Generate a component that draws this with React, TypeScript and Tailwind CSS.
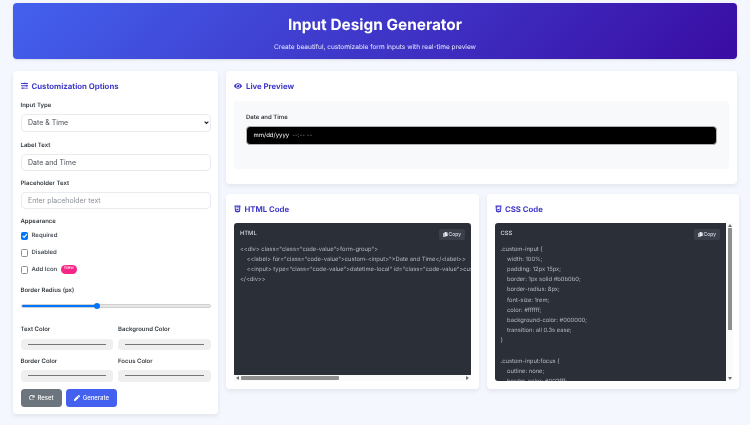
import React from "react";
import { FaCopy, FaCss3Alt, FaEye, FaHtml5, FaPen, FaRedo, FaSlidersH } from "react-icons/fa";

const labelCls = "block text-[6px] leading-[10px] font-semibold text-[#343a40]";
const titleCls = "flex items-center h-[11px] text-[7.8px] font-bold text-[#3f37c9]";
const inputCls = "block w-full h-[17.5px] px-[6.5px] text-[7px] border border-[#e9ecef] rounded-[4px] bg-white text-[#495057] outline-none";
const codeCls = "mt-[5px] pl-[6px] text-[5.8px] leading-[10.2px] text-[#b4b9c2] whitespace-pre [font-family:inherit]";
const cardCls = "rounded-[4px] bg-white shadow-[0_2px_5px_rgba(0,0,0,0.08)]";

const htmlLines = [
  '<<div> class="class="code-value">form-group">',
  '    <<label> for="class="code-value">custom-<input>">Date and Time</<label>>',
  '    <<input> type="class="code-value">datetime-local" id="class="code-value">custom-input" required>',
  "</<div>>",
];

const cssLines = [
  ".custom-input {",
  "    width: 100%;",
  "    padding: 12px 15px;",
  "    border: 1px solid #b0b0b0;",
  "    border-radius: 8px;",
  "    font-size: 1rem;",
  "    color: #ffffff;",
  "    background-color: #000000;",
  "    transition: all 0.3s ease;",
  "}",
  "",
  ".custom-input:focus {",
  "    outline: none;",
  "    border-color: #002fff;",
];

function ColorField({ label }: { label: string }) {
  return (
    <div>
      <label className={labelCls}>{label}</label>
      <div className="mt-[3.5px] h-[11.5px] rounded-[4px] bg-[#efefef] flex items-center px-[7px]">
        <div className="h-[1px] w-full bg-[#767676]" />
      </div>
    </div>
  );
}

function CheckRow({ label, checked, badge }: { label: string; checked?: boolean; badge?: boolean }) {
  return (
    <label className="flex items-center h-[10px] text-[6px] font-semibold text-[#495057]">
      <span className="relative w-[7.5px] h-[7.5px] mr-[3.5px] mt-[1px] shrink-0">
        <input
          type="checkbox"
          defaultChecked={checked}
          className="block appearance-none w-full h-full m-0 rounded-[1.5px] border border-[#8f8f8f] bg-white checked:bg-[#0075ff] checked:border-[#0075ff]"
        />
        {checked && (
          <svg viewBox="0 0 8 8" className="absolute inset-0 w-full h-full">
            <path d="M1.8 4.2 3.3 5.7 6.3 2.2" fill="none" stroke="#fff" strokeWidth="1.2" />
          </svg>
        )}
      </span>
      <span className="mb-[1px]">{label}</span>
      {badge && (
        <span className="ml-[4px] h-[9.5px] px-[3px] rounded-full bg-[#f72585] text-[#ffd9ea] text-[4.5px] font-medium flex items-center">New</span>
      )}
    </label>
  );
}

function CodeHeader({ title }: { title: string }) {
  return (
    <div className="flex items-center justify-between pl-[6px] pr-[6px] pt-[6px]">
      <span className="text-[5.8px] font-medium text-[#d8dbe0]">{title}</span>
      <button className="flex items-center gap-[1px] h-[10.5px] px-[4px] rounded-[2px] bg-[#3a3f4a] text-[#e9ecef] text-[5px]">
        <FaCopy className="w-[5px] h-[5px]" />
        Copy
      </button>
    </div>
  );
}

function Arrow({ dir }: { dir: "left" | "right" | "up" | "down" }) {
  if (dir === "left") return <div className="w-0 h-0 border-y-[2px] border-y-transparent border-r-[3px] border-r-[#6f6f6f]" />;
  if (dir === "right") return <div className="w-0 h-0 border-y-[2px] border-y-transparent border-l-[3px] border-l-[#6f6f6f]" />;
  if (dir === "up") return <div className="w-0 h-0 border-x-[2px] border-x-transparent border-b-[3px] border-b-[#6f6f6f]" />;
  return <div className="w-0 h-0 border-x-[2px] border-x-transparent border-t-[3px] border-t-[#6f6f6f]" />;
}

export default function App() {
  return (
    <div className="h-[425px] overflow-hidden bg-[#f5f7ff]">
      <div className="px-[13px] pt-[3px] text-[#343a40] [will-change:transform] [text-rendering:geometricPrecision] [font-family:Inter,sans-serif]">
        {/* header */}
        <header className="h-[56px] w-[724px] rounded-[4px] bg-[linear-gradient(135deg,#4361ee,#3a0ca3)] shadow-sm flex flex-col items-center text-white">
          <h1 className="mt-[12px] text-[15.4px] leading-[20px] font-bold">Input Design Generator</h1>
          <p className="mt-[6.5px] text-[6.55px] leading-[10px] text-[#e6e7fa]">Create beautiful, customizable form inputs with real-time preview</p>
        </header>

        <div className="mt-[12px] flex items-start gap-[8px]">
          {/* options */}
          <aside className={cardCls + " w-[205px] h-[343px] shrink-0 px-[7.5px] pt-[10px]"}>
            <h2 className={titleCls}>
              <FaSlidersH className="w-[7.5px] h-[7.5px] mr-[3.5px] mb-[1.5px]" />
              Customization Options
            </h2>
            <label className={labelCls + " mt-[9px]"}>Input Type</label>
            <div className="relative mt-[3px]">
              <select defaultValue="dt" className="block appearance-none w-full h-[18px] px-[6.5px] text-[7px] border border-[#e9ecef] rounded-[4px] bg-white text-[#495057]">
                <option value="dt">Date &amp; Time</option>
              </select>
              <svg viewBox="0 0 8 8" className="absolute right-[2px] top-[6px] w-[5px] h-[5px]">
                <path d="M1 2.5 4 5.5 7 2.5" fill="none" stroke="#222" strokeWidth="1.8" />
              </svg>
            </div>
            <label className={labelCls + " mt-[8.5px]"}>Label Text</label>
            <input className={inputCls + " mt-[3px]"} defaultValue="Date and Time" />
            <label className={labelCls + " mt-[7.5px]"}>Placeholder Text</label>
            <input className={inputCls + " mt-[3px] placeholder:text-[#8a8f96]"} placeholder="Enter placeholder text" />

            <label className={labelCls + " mt-[7.5px]"}>Appearance</label>
            <div className="mt-[4px] flex flex-col gap-[7px]">
              <CheckRow label="Required" checked />
              <CheckRow label="Disabled" />
              <CheckRow label="Add Icon" badge />
            </div>

            <label className={labelCls + " mt-[11px]"}>Border Radius (px)</label>
            <input
              type="range"
              min={0}
              max={20}
              defaultValue={8}
              className="block appearance-none w-full h-[4px] mt-[8.5px] m-0 rounded-full bg-[linear-gradient(90deg,#0075ff_41%,#e6e6e6_41%)] border-[0.5px] border-[#d0d0d0] [&::-webkit-slider-thumb]:appearance-none [&::-webkit-slider-thumb]:w-[6px] [&::-webkit-slider-thumb]:h-[6px] [&::-webkit-slider-thumb]:rounded-full [&::-webkit-slider-thumb]:bg-[#0075ff]"
            />

            <div className="mt-[17px] grid grid-cols-2 gap-x-[5px] gap-y-[6.5px]">
              <ColorField label="Text Color" />
              <ColorField label="Background Color" />
              <ColorField label="Border Color" />
              <ColorField label="Focus Color" />
            </div>

            <div className="mt-[7px] flex gap-[3.5px]">
              <button className="flex items-center gap-[3px] h-[18px] px-[8.5px] rounded-[3.5px] bg-[#6c757d] text-white text-[6px] font-medium">
                <FaRedo className="w-[5.5px] h-[5.5px]" />
                Reset
              </button>
              <button className="flex items-center gap-[3px] h-[18px] px-[8px] rounded-[3.5px] bg-[#4361ee] text-white text-[6px] font-medium">
                <FaPen className="w-[6px] h-[6px]" />
                Generate
              </button>
            </div>
          </aside>

          <div className="w-[511px] shrink-0">
            {/* preview */}
            <section className={cardCls + " h-[113px] px-[8px] pt-[10px]"}>
              <h2 className={titleCls}>
                <FaEye className="w-[8px] h-[8px] mr-[4px] mb-[1.5px]" />
                Live Preview
              </h2>
              <div className="mt-[9px] h-[68px] rounded-[4px] bg-[#f8f9fa] px-[12px] pt-[12px]">
                <label className={labelCls}>Date and Time</label>
                <div className="flex items-center h-[19px] mt-[3px] px-[6.5px] text-[6px] rounded-[4px] border border-[#b0b0b0] bg-black text-white">
                  mm/dd/yyyy<span className="ml-[3px] text-[#8d8d8d]">--:-- --</span>
                </div>
              </div>
            </section>

            <div className="mt-[10px] flex gap-[8px] w-[513px]">
              {/* html */}
              <section className={cardCls + " w-[253px] h-[195px] shrink-0 px-[8px] pt-[10px]"}>
                <h2 className={titleCls}>
                  <FaHtml5 className="w-[7px] h-[8px] mr-[3.5px] mb-[1.5px]" />
                  HTML Code
                </h2>
                <div className="mt-[8px] h-[152px] rounded-t-[3px] bg-[#2b2f38] overflow-hidden">
                  <CodeHeader title="HTML" />
                  <pre className={codeCls}>{htmlLines.join("\n")}</pre>
                </div>
                <div className="h-[6px] flex items-center gap-[1px] bg-[#fafafa] px-[2px]">
                  <Arrow dir="left" />
                  <div className="flex-1 ml-[1px]">
                    <div className="h-[4px] w-[98px] bg-[#8f8f8f] rounded-[1px]" />
                  </div>
                  <Arrow dir="right" />
                </div>
              </section>

              {/* css */}
              <section className={cardCls + " w-[252px] h-[195px] shrink-0 pl-[7.5px] pr-[6px] pt-[10px]"}>
                <h2 className={titleCls}>
                  <FaCss3Alt className="w-[7px] h-[8px] mr-[3.5px] mb-[1.5px]" />
                  CSS Code
                </h2>
                <div className="mt-[8px] h-[158px] flex">
                  <div className="flex-1 min-w-0 rounded-l-[3px] bg-[#2b2f38] overflow-hidden">
                    <CodeHeader title="CSS" />
                    <pre className={codeCls}>{cssLines.join("\n")}</pre>
                  </div>
                  <div className="w-[7px] flex flex-col items-center bg-[#fafafa] py-[1px]">
                    <Arrow dir="up" />
                    <div className="flex-1 w-full mt-[1px]">
                      <div className="h-[102px] w-[4px] mx-auto bg-[#8f8f8f]" />
                    </div>
                    <Arrow dir="down" />
                  </div>
                </div>
              </section>
            </div>
          </div>
        </div>
      </div>
    </div>
  );
}
